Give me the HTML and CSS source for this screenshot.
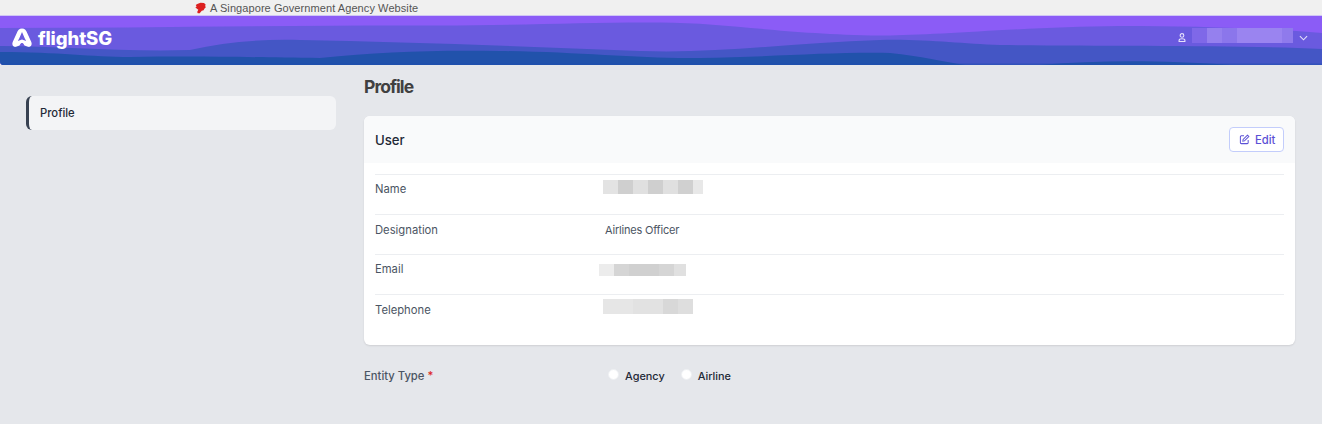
FILE: index.html
```html
<!DOCTYPE html>
<html lang="en">
<head>
<meta charset="utf-8">
<title>flightSG Profile</title>
<link rel="stylesheet" href="styles.css">
</head>
<body>
<div class="gov-bar">
  <svg class="lion" viewBox="0 0 12 12" aria-hidden="true"><path d="M2.500 1.500 6 .3l3.800.2 1.800 1.600-.5 1.700.7 1.400-1.600 1.500-.8 1.700-2 .5L6 10.500l-.8 1.300-2.200-.1-.6-1.300 1.200-2.400L1.800 6.500.4 5.300l1.400-1L.8 2.800z"/></svg>
  <span>A Singapore Government Agency Website</span>
</div>
<header class="topbar">
  <svg class="waves" viewBox="0 0 1322 49" preserveAspectRatio="none" aria-hidden="true">
    <path class="wave-a" d="M0 12C150 12 300 9 440 9.500C520 9.500 590 6 660 6.500C730 7 780 18 880 19.500C930 20 1020 11 1120 10C1190 10 1260 12 1322 17V49H0Z"/>
    <path class="wave-b" d="M0 30C60 30 120 36 190 34C225 26 260 23 300 24C400 26 520 30 640 35C720 38 800 26 880 24C930 23 960 28 1000 29C1100 30 1240 29 1322 33V49H0Z"/>
    <path class="wave-c" d="M0 36C60 36 90 41 130 41C200 40 240 41 320 42C380 36 430 34 500 35C580 36 640 43 700 42C770 41 830 36 890 37C920 40 945 46 965 49H0ZM1040 49C1100 44 1160 44 1230 49Z"/>
    <path class="wave-d" d="M0 47.500H1322V49H0Z"/>
  </svg>
  <div class="brand">
    <svg class="logo" viewBox="0 0 20 20" aria-hidden="true"><path fill-rule="evenodd" d="M10 .5C12.800 .5 14.300 2.500 15.200 5L19.300 14C20.400 17 18.800 19.500 16 18.800L12.500 17.500C11.500 15.500 10.800 15 10 15S8.500 15.500 7.500 17.500L4 18.800C1.200 19.500-.4 17 .7 14L4.800 5C5.700 2.500 7.200 .5 10 .5ZM10 4 7.200 10.500 5.800 13 10 11.500 14.200 13 12.800 10.500Z"/></svg>
    <span class="brand-name">flightSG</span>
  </div>
  <div class="account">
    <svg class="user-icon" viewBox="0 0 12 12" aria-hidden="true"><circle cx="6" cy="3.500" r="2.200"/><path d="M2.500 10.800V9.500C2.500 8 4 7.500 6 7.500S9.500 8 9.500 9.500V10.800Z"/></svg>
    <span class="blur blur-user"></span>
    <svg class="chevron" viewBox="0 0 10 6" aria-hidden="true"><path d="M1 1 5 5 9 1"/></svg>
  </div>
</header>
<div class="page">
  <nav class="sidebar">
    <a class="side-item">Profile</a>
  </nav>
  <main class="content">
    <h1 class="title">Profile</h1>
    <section class="card">
      <div class="card-head">
        <h2 class="card-title">User</h2>
        <button class="edit-btn" type="button">
          <svg class="edit-icon" viewBox="0 0 12 12" aria-hidden="true"><path d="M5.500 2H2.500A1 1 0 0 0 1.500 3V9.500A1 1 0 0 0 2.500 10.500H9A1 1 0 0 0 10 9.500V6.500"/><path d="M9.200 1.300 10.700 2.800 6 7.500 4.200 7.800 4.500 6Z"/></svg>
          Edit
        </button>
      </div>
      <div class="card-body">
        <div class="row"><span class="label">Name</span><span class="blur blur-name"></span></div>
        <div class="row"><span class="label">Designation</span><span class="value">Airlines Officer</span></div>
        <div class="row"><span class="label">Email</span><span class="blur blur-email"></span></div>
        <div class="row"><span class="label">Telephone</span><span class="blur blur-phone"></span></div>
      </div>
    </section>
    <div class="entity">
      <span class="entity-label">Entity Type <b class="req">*</b></span>
      <div class="radios">
        <label class="radio"><span class="dot"></span>Agency</label>
        <label class="radio"><span class="dot"></span>Airline</label>
      </div>
    </div>
  </main>
</div>
</body>
</html>
```
FILE: styles.css
```css
* { box-sizing: border-box; }
html, body { margin: 0; height: 100%; }
body {
  background: #e5e7eb;
  font-family: Inter, "Liberation Sans", sans-serif;
  color: #374151;
  overflow: hidden;
}
.gov-bar {
  height: 16px;
  background: #f0f0f0;
  border-bottom: 1px solid #cfc6f5;
  padding-left: 195px;
  display: flex;
  align-items: center;
  gap: 4px;
  font-family: "Liberation Sans", sans-serif;
  font-size: 11px;
  letter-spacing: .08px;
  color: #555;
}
.lion { width: 11px; height: 12px; fill: #dc2020; flex: none; }
.topbar {
  position: relative;
  height: 49px;
  background: #8b5cf6;
  border-bottom-left-radius: 4px;
  overflow: hidden;
  display: flex;
  justify-content: space-between;
  align-items: flex-start;
}
.waves { position: absolute; inset: 0; width: 100%; height: 100%; }
.wave-a { fill: #6a5adf; }
.wave-b { fill: #4456c5; }
.wave-c { fill: #2152ab; }
.wave-d { fill: #1e4db0; opacity: .5; }
.brand {
  position: relative;
  display: flex;
  align-items: center;
  gap: 6px;
  margin: 12px 0 0 12px;
  height: 20px;
}
.logo { width: 20px; height: 20px; fill: #fff; }
.brand-name {
  font-size: 18.500px;
  font-weight: 800;
  color: #fff;
  letter-spacing: -.1px;
}
.account {
  position: relative;
  display: flex;
  align-items: center;
  margin: 12px 14px 0 0;
  height: 15px;
}
.user-icon {
  width: 10px;
  height: 11px;
  margin: 4px 5px 0 0;
  fill: none;
  stroke: #e6e1fb;
  stroke-width: 1.300;
}
.chevron {
  width: 9px;
  height: 6px;
  margin: 4px 0 0 6px;
  fill: none;
  stroke: #e6e1fb;
  stroke-width: 1.200;
}
.blur { display: block; }
.blur-user {
  width: 101px;
  height: 15px;
  background: linear-gradient(90deg, #7f68e8 0 15px, #9580ee 15px 30px, #8b76eb 30px 45px, #9a84f0 45px 90px, #8f7aec 90px);
}
.page { display: flex; align-items: flex-start; }
.sidebar { width: 310px; margin: 31px 0 0 26px; flex: none; }
.side-item {
  display: flex;
  align-items: center;
  height: 34px;
  padding-left: 11px;
  background: #f3f4f6;
  border-left: 3px solid #374151;
  border-radius: 6px;
  font-size: 11.250px;
  font-weight: 500;
  color: #1f2937;
}
.content { width: 931px; margin-left: 28px; flex: none; }
.title {
  margin: 0;
  height: 51px;
  padding-top: 11px;
  font-size: 17.500px;
  line-height: 22px;
  font-weight: 700;
  letter-spacing: -.95px;
  color: #404040;
}
.card {
  background: #fff;
  border-radius: 6px;
  box-shadow: 0 1px 2px rgba(0, 0, 0, .1);
  height: 229px;
  overflow: hidden;
}
.card-head {
  height: 47px;
  background: #f9fafb;
  display: flex;
  justify-content: space-between;
  align-items: center;
  padding: 0 11px;
}
.card-title {
  margin: 0;
  font-size: 13.200px;
  font-weight: 500;
  color: #1f2937;
}
.edit-btn {
  display: flex;
  align-items: center;
  gap: 5px;
  width: 55px;
  height: 25px;
  padding: 0 0 0 9px;
  background: #fff;
  border: 1px solid #c3cdfb;
  border-radius: 4px;
  font: 500 11.250px Inter, "Liberation Sans", sans-serif;
  color: #5b50d6;
}
.edit-icon {
  width: 11px;
  height: 11px;
  fill: none;
  stroke: #5b50d6;
  stroke-width: 1.100;
}
.card-body { padding: 11px 11px 0; }
.row {
  display: grid;
  grid-template-columns: 230px 1fr;
  height: 40px;
  border-top: 1px solid #eceef1;
  padding-top: 5px;
  font-size: 11.250px;
  line-height: 18px;
  color: #4b5563;
}
.label { padding-top: 0; }
.value { font-size: 11px; letter-spacing: -.2px; }
.row:nth-child(2) .label, .row:nth-child(2) .value, .row:nth-child(4) .label { padding-top: 1px; }
.blur-name {
  width: 100px;
  height: 14px;
  margin-left: -2px;
  background: linear-gradient(90deg, #e3e3e3 0 15px, #cfcfcf 15px 30px, #e0e0e0 30px 45px, #cfcfcf 45px 60px, #e0e0e0 60px 75px, #d0d0d0 75px 90px, #e8e8e8 90px);
}
.blur-email {
  width: 87px;
  height: 12px;
  margin: 4px 0 0 -6px;
  background: linear-gradient(90deg, #ececec 0 15px, #d5d5d5 15px 30px, #d0d0d0 30px 60px, #d5d5d5 60px 75px, #e0e0e0 75px);
}
.blur-phone {
  width: 90px;
  height: 15px;
  margin: -1px 0 0 -2px;
  background: linear-gradient(90deg, #e6e6e6 0 30px, #e2e2e2 30px 60px, #d8d8d8 60px 75px, #dedede 75px);
}
.entity {
  display: grid;
  grid-template-columns: 241px 1fr;
  margin-top: 22px;
  font-size: 11.250px;
  line-height: 18px;
}
.entity-label { color: #4b5563; font-weight: 500; }
.req { color: #dc2626; font-weight: 500; }
.radios { display: flex; gap: 16px; margin-left: 3px; }
.radio {
  display: flex;
  align-items: center;
  gap: 6px;
  color: #1f2937;
  font-size: 10.900px;
  font-weight: 500;
}
.dot {
  width: 11px;
  height: 11px;
  margin-top: -3px;
  border-radius: 50%;
  background: #fff;
  border: 1px solid #eef0f3;
}
```
